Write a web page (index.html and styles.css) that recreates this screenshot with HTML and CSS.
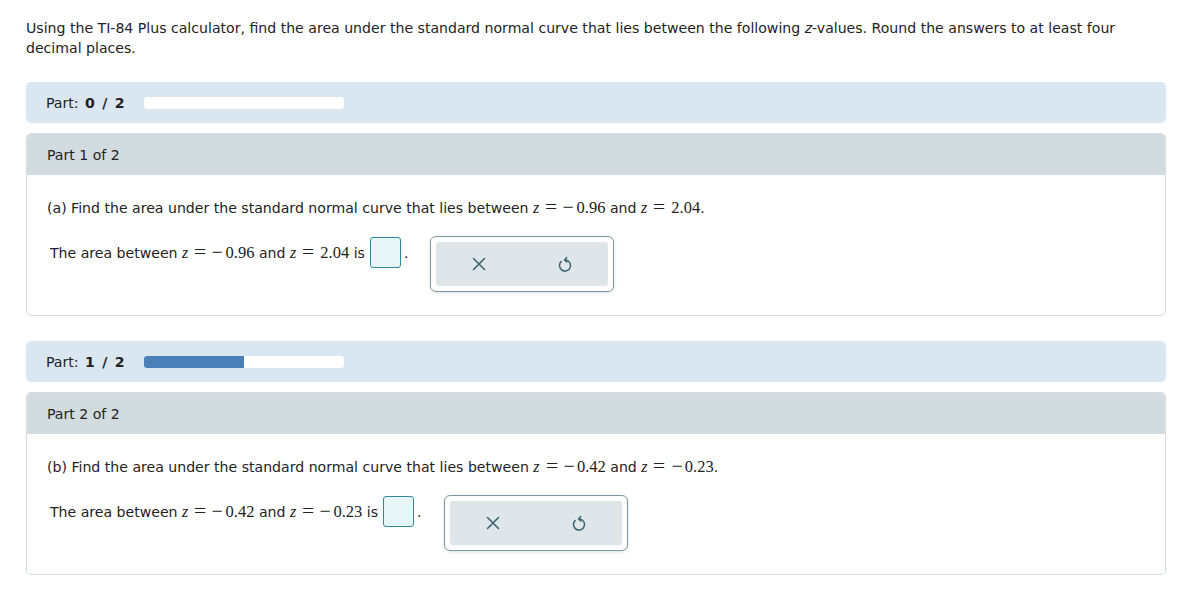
FILE: index.html
```html
<!DOCTYPE html>
<html>
<head>
<meta charset="utf-8">
<link rel="stylesheet" href="styles.css">
</head>
<body>
<div class="page">
  <p class="intro">Using the TI-84 Plus calculator, find the area under the standard normal curve that lies between the following <i>z</i>-values. Round the answers to at least four decimal places.</p>

  <div class="partbar">
    <span class="partlabel">Part: <b>0 / 2</b></span>
    <div class="progress"><div class="fill" style="width:0%"></div></div>
  </div>
  <div class="card">
    <div class="cardhead">Part 1 of 2</div>
    <div class="cardbody">
      <p class="question">(a) Find the area under the standard normal curve that lies between <span class="m"><i>z</i><span class="op">=</span><span class="neg">−</span>0.96</span> and <span class="m"><i>z</i><span class="op">=</span>2.04</span>.</p>
      <div class="answer">
        <span class="atext">The area between <span class="m"><i>z</i><span class="op">=</span><span class="neg">−</span>0.96</span> and <span class="m"><i>z</i><span class="op">=</span>2.04</span> is</span>
        <span class="inputbox"></span>
        <span class="dot">.</span>
        <div class="tools">
          <div class="toolsinner">
            <span class="tool"><svg width="14" height="14" viewBox="0 0 14 14"><path d="M1.5 1.5 L12.5 12.5 M12.5 1.5 L1.5 12.5" stroke="#3f6470" stroke-width="1.6" fill="none" stroke-linecap="round"/></svg></span>
            <span class="tool"><svg width="14" height="16" viewBox="0 0 14 16"><path d="M3.1 5.6 A5.5 5.5 0 1 0 7 4" stroke="#3f6470" stroke-width="1.5" fill="none" stroke-linecap="round"/><path d="M8.6 1.6 L6.6 4 L8.8 6" stroke="#3f6470" stroke-width="1.5" fill="none" stroke-linecap="round" stroke-linejoin="round"/></svg></span>
          </div>
        </div>
      </div>
    </div>
  </div>

  <div class="partbar">
    <span class="partlabel">Part: <b>1 / 2</b></span>
    <div class="progress"><div class="fill" style="width:50%"></div></div>
  </div>
  <div class="card">
    <div class="cardhead">Part 2 of 2</div>
    <div class="cardbody">
      <p class="question">(b) Find the area under the standard normal curve that lies between <span class="m"><i>z</i><span class="op">=</span><span class="neg">−</span>0.42</span> and <span class="m"><i>z</i><span class="op">=</span><span class="neg">−</span>0.23</span>.</p>
      <div class="answer">
        <span class="atext">The area between <span class="m"><i>z</i><span class="op">=</span><span class="neg">−</span>0.42</span> and <span class="m"><i>z</i><span class="op">=</span><span class="neg">−</span>0.23</span> is</span>
        <span class="inputbox"></span>
        <span class="dot">.</span>
        <div class="tools">
          <div class="toolsinner">
            <span class="tool"><svg width="14" height="14" viewBox="0 0 14 14"><path d="M1.5 1.5 L12.5 12.5 M12.5 1.5 L1.5 12.5" stroke="#3f6470" stroke-width="1.6" fill="none" stroke-linecap="round"/></svg></span>
            <span class="tool"><svg width="14" height="16" viewBox="0 0 14 16"><path d="M3.1 5.6 A5.5 5.5 0 1 0 7 4" stroke="#3f6470" stroke-width="1.5" fill="none" stroke-linecap="round"/><path d="M8.6 1.6 L6.6 4 L8.8 6" stroke="#3f6470" stroke-width="1.5" fill="none" stroke-linecap="round" stroke-linejoin="round"/></svg></span>
          </div>
        </div>
      </div>
    </div>
  </div>
</div>
</body>
</html>
```

FILE: styles.css
```css
html, body {
  margin: 0;
  padding: 0;
  background: #ffffff;
}
body {
  font-family: "DejaVu Sans", Verdana, sans-serif;
  font-size: 14.1px;
  color: #222222;
}
.page {
  padding: 18px 34px 0 26px;
}
.intro {
  margin: 0 0 24px 0;
  line-height: 20px;
}
.partbar {
  display: flex;
  align-items: center;
  height: 41px;
  padding-left: 20px;
  background: #dae6f0;
  border-radius: 5px;
  margin-bottom: 10px;
}
.partlabel {
  width: 98px;
}
.partlabel b {
  letter-spacing: 1.2px;
  margin-left: 2px;
}
.progress {
  width: 200px;
  height: 12px;
  background: #ffffff;
  border-radius: 3px;
  overflow: hidden;
}
.fill {
  height: 100%;
  background: #4a7fb8;
}
.card {
  border: 1px solid #d6dcdf;
  border-radius: 5px;
  margin-bottom: 25px;
  overflow: hidden;
}
.cardhead {
  height: 41px;
  display: flex;
  align-items: center;
  padding-left: 20px;
  background: #d2dbdf;
}
.cardbody {
  padding: 23px 20px 23px 20px;
}
.question {
  margin: 0 0 18px 0;
  height: 20px;
  line-height: 20px;
}
.m {
  font-family: "Liberation Serif", "Times New Roman", serif;
  font-size: 16.5px;
  line-height: 1;
  white-space: nowrap;
}
.m i {
  font-size: 16px;
}
.op {
  display: inline-block;
  font-size: 18px;
  line-height: 1;
  margin: 0 7px;
  transform: scaleX(1.2);
}
.neg {
  display: inline-block;
  font-size: 18px;
  line-height: 1;
  margin-right: 3px;
  transform: scaleX(1.1);
}
.answer {
  display: flex;
  align-items: flex-start;
  padding-left: 3px;
}
.atext {
  height: 20px;
  line-height: 20px;
  margin-top: 7px;
}
.inputbox {
  width: 29px;
  height: 29px;
  margin: 1px 0 0 5px;
  border: 1px solid #2b8a9b;
  border-radius: 3px;
  background: #e8f5f9;
}
.dot {
  line-height: 20px;
  margin: 7px 0 0 3px;
}
.tools {
  margin-left: 22px;
  padding: 5px;
  border: 1px solid #7e98a2;
  border-radius: 6px;
  background: #ffffff;
  box-shadow: 0 1px 4px rgba(0, 0, 0, 0.12);
}
.toolsinner {
  display: flex;
  width: 172px;
  height: 44px;
  background: #dfe6e9;
  border-radius: 3px;
}
.tool {
  flex: 1;
  display: flex;
  align-items: center;
  justify-content: center;
}
```
